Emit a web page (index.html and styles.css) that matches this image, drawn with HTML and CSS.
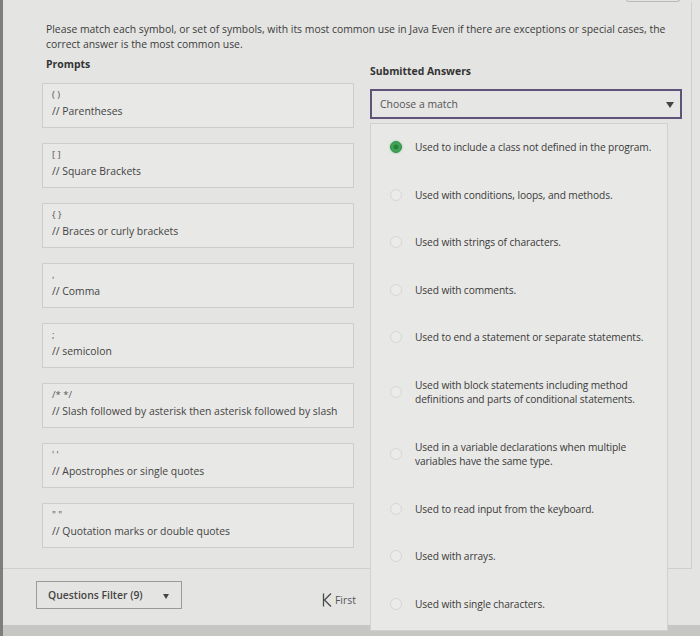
FILE: index.html
```html
<!DOCTYPE html>
<html lang="en">
<head>
<meta charset="utf-8">
<title>Matching question</title>
<link rel="stylesheet" href="styles.css">
</head>
<body>
<div class="screen">
  <div class="topbar"><div class="topbtn"></div></div>
  <main class="content">
    <p class="instructions">Please match each symbol, or set of symbols, with its most common use in Java Even if there are exceptions or special cases, the correct answer is the most common use.</p>
    <div class="columns">
      <section class="prompts">
        <h3 class="heading">Prompts</h3>
        <ol class="prompt-list">
          <li class="prompt"><span class="sym">( )</span><span class="desc">// Parentheses</span></li>
          <li class="prompt"><span class="sym">[ ]</span><span class="desc">// Square Brackets</span></li>
          <li class="prompt"><span class="sym">{ }</span><span class="desc">// Braces or curly brackets</span></li>
          <li class="prompt"><span class="sym">,</span><span class="desc">// Comma</span></li>
          <li class="prompt"><span class="sym">;</span><span class="desc">// semicolon</span></li>
          <li class="prompt"><span class="sym">/* */</span><span class="desc">// Slash followed by asterisk then asterisk followed by slash</span></li>
          <li class="prompt"><span class="sym">' '</span><span class="desc">// Apostrophes or single quotes</span></li>
          <li class="prompt"><span class="sym">" "</span><span class="desc">// Quotation marks or double quotes</span></li>
        </ol>
      </section>
      <section class="answers">
        <h3 class="heading heading-answers">Submitted Answers</h3>
        <div class="combo">
          <div class="select"><span>Choose a match</span><span class="caret"></span></div>
          <ul class="menu">
            <li class="option"><span class="radio radio-on"></span><span class="opt-text">Used to include a class not defined in the program.</span></li>
            <li class="option"><span class="radio"></span><span class="opt-text">Used with conditions, loops, and methods.</span></li>
            <li class="option"><span class="radio"></span><span class="opt-text">Used with strings of characters.</span></li>
            <li class="option"><span class="radio"></span><span class="opt-text">Used with comments.</span></li>
            <li class="option"><span class="radio"></span><span class="opt-text">Used to end a statement or separate statements.</span></li>
            <li class="option"><span class="radio"></span><span class="opt-text">Used with block statements including method definitions and parts of conditional statements.</span></li>
            <li class="option"><span class="radio"></span><span class="opt-text">Used in a variable declarations when multiple variables have the same type.</span></li>
            <li class="option"><span class="radio"></span><span class="opt-text">Used to read input from the keyboard.</span></li>
            <li class="option"><span class="radio"></span><span class="opt-text">Used with arrays.</span></li>
            <li class="option"><span class="radio"></span><span class="opt-text">Used with single characters.</span></li>
          </ul>
        </div>
      </section>
    </div>
  </main>
  <footer class="footer">
    <div class="filter"><span>Questions Filter (9)</span><span class="caret caret-small"></span></div>
    <div class="first">
      <svg class="first-icon" width="10" height="16" viewBox="0 0 10 16" aria-hidden="true"><path d="M1.5 1.5V14.5M9 1.5L2.5 8L9 14.5" fill="none" stroke="#4a4a4a" stroke-width="1.3"/></svg>
      <span>First</span>
    </div>
  </footer>
  <div class="bottomstrip"></div>
</div>
</body>
</html>
```

FILE: styles.css
```css
* { box-sizing: border-box; }
html, body { margin: 0; padding: 0; }
body {
  font-family: "Open Sans", "Liberation Sans", sans-serif;
  color: #3a3a3a;
  background: #e3e3e1;
}
.screen {
  width: 700px;
  height: 636px;
  position: relative;
  overflow: hidden;
  background: #e4e4e2;
  border-left: 3px solid #7e7e7c;
  display: flex;
  flex-direction: column;
}
.topbar {
  height: 2px;
  display: flex;
  justify-content: flex-end;
  padding-right: 20px;
  flex: none;
}
.topbtn {
  width: 54px;
  height: 3px;
  margin-top: -1px;
  border: 1px solid #b9b9b7;
  border-top: none;
  border-radius: 0 0 3px 3px;
}
.content {
  width: 689px;
  height: 567px;
  flex: none;
  border-right: 1px solid #cfcfcd;
  border-bottom: 1px solid #cfcfcd;
  padding: 20px 0 0 39px;
}
.instructions {
  margin: 0 0 0 4px;
  width: 630px;
  font-size: 10.4px;
  line-height: 15px;
  color: #3c3c3c;
}
.columns {
  display: flex;
  gap: 16px;
  margin-top: 5px;
}
.prompts { width: 312px; }
.answers { width: 312px; }
.heading {
  margin: 0 0 0 4px;
  font-size: 10.4px;
  line-height: 15px;
  font-weight: 700;
  color: #333;
}
.heading-answers { margin: 7px 0 0 0; }
.prompt-list {
  list-style: none;
  margin: 11px 0 0 0;
  padding: 0;
  display: flex;
  flex-direction: column;
  gap: 15px;
}
.prompt {
  height: 45px;
  border: 1px solid #cdcdcb;
  background: #e8e8e6;
  padding: 3px 9px 0;
  display: flex;
  flex-direction: column;
  font-size: 10.4px;
  line-height: 16px;
  color: #444;
}
.sym { font-size: 9.5px; color: #555; }
.desc { color: #444; }
.combo {
  position: relative;
  margin-top: 10px;
}
.select {
  height: 30px;
  border: 2px solid #5f537a;
  display: flex;
  align-items: center;
  justify-content: space-between;
  padding: 0 6px 0 8px;
  font-size: 10.4px;
  color: #555;
  background: #e6e6e4;
}
.caret {
  width: 0;
  height: 0;
  border-left: 4px solid transparent;
  border-right: 4px solid transparent;
  border-top: 6px solid #444;
  margin-top: 2px;
}
.caret-small {
  border-left-width: 3px;
  border-right-width: 3px;
  border-top-width: 5px;
}
.menu {
  position: absolute;
  left: 0;
  top: calc(100% + 4px);
  width: 298px;
  height: 508px;
  margin: 0;
  padding: 0;
  list-style: none;
  border: 1px solid #d1d1cf;
  background: #e8e8e6;
  z-index: 2;
}
.option {
  display: flex;
  align-items: center;
  padding: 16px 6px 17px 19px;
  font-size: 10.2px;
  letter-spacing: -0.1px;
  line-height: 14.5px;
  color: #3a3a3a;
}
.radio {
  flex: none;
  width: 12px;
  height: 12px;
  border-radius: 50%;
  border: 1px solid #d6d6d4;
  background: #ebebe9;
  margin-right: 13px;
}
.radio-on {
  background: radial-gradient(circle, #27803b 0 2px, #3fa455 3px);
  border: 1px solid #2f8a45;
  box-shadow: 0 0 2px #6fc07f;
}
.opt-text { min-width: 0; }
.footer {
  flex: none;
  height: 56px;
  display: flex;
  align-items: flex-start;
  padding: 12px 0 0 33px;
}
.filter {
  width: 146px;
  height: 28px;
  border: 1px solid #9a9a98;
  display: flex;
  align-items: center;
  justify-content: space-between;
  padding: 0 12px 0 11px;
  font-size: 10.4px;
  font-weight: 600;
  color: #444;
}
.first {
  margin-left: 140px;
  margin-top: 11px;
  display: flex;
  align-items: center;
  gap: 3px;
  font-size: 10.4px;
  color: #555;
}
.bottomstrip {
  flex: none;
  height: 11px;
  background: #c6c6c4;
}
```
